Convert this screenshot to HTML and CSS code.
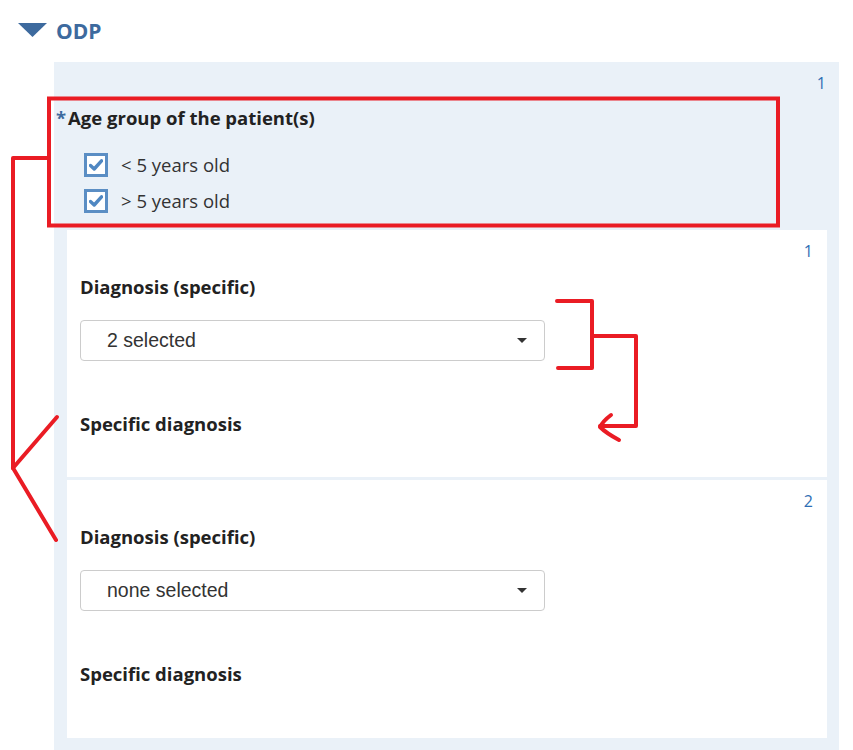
FILE: index.html
```html
<!DOCTYPE html>
<html lang="en">
<head>
<meta charset="utf-8">
<title>ODP</title>
<link rel="stylesheet" href="styles.css">
</head>
<body>
<div class="page">
  <div class="section-header">
    <svg class="toggle" width="29" height="14" viewBox="0 0 29 14"><polygon points="0,0 29,0 14.5,14" fill="#3d6a9e"/></svg>
    <span class="section-title">ODP</span>
  </div>

  <div class="panel">
    <div class="counter">1</div>
    <div class="question">
      <div class="q-title"><span class="req">*</span>Age group of the patient(s)</div>
      <div class="options">
        <label class="option">
          <span class="checkbox"><svg width="14" height="12" viewBox="0 0 14 12"><path d="M1.5 6.5 L5.2 10 L12.5 1.8" fill="none" stroke="#4f87c2" stroke-width="3.4" stroke-linecap="round" stroke-linejoin="round"/></svg></span>
          <span class="opt-label">&lt; 5 years old</span>
        </label>
        <label class="option">
          <span class="checkbox"><svg width="14" height="12" viewBox="0 0 14 12"><path d="M1.5 6.5 L5.2 10 L12.5 1.8" fill="none" stroke="#4f87c2" stroke-width="3.4" stroke-linecap="round" stroke-linejoin="round"/></svg></span>
          <span class="opt-label">&gt; 5 years old</span>
        </label>
      </div>
    </div>

    <div class="cards">
      <div class="card">
        <div class="counter card-counter">1</div>
        <div class="field-label">Diagnosis (specific)</div>
        <div class="select"><span class="select-text">2 selected</span><span class="caret"></span></div>
        <div class="field-label sub-label">Specific diagnosis</div>
      </div>
      <div class="card card-last">
        <div class="counter card-counter">2</div>
        <div class="field-label">Diagnosis (specific)</div>
        <div class="select"><span class="select-text">none selected</span><span class="caret"></span></div>
        <div class="field-label sub-label">Specific diagnosis</div>
      </div>
    </div>
  </div>

  <svg class="annotations" width="853" height="750" viewBox="0 0 853 750">
    <g fill="none" stroke="#ea1c24" stroke-width="4" stroke-linecap="round" stroke-linejoin="round">
      <rect x="49" y="98.5" width="729" height="127" stroke-linecap="butt" stroke-linejoin="miter"/>
      <path d="M47 158 L13 158 L13 468"/>
      <path d="M13 468 L57 417"/>
      <path d="M13 468 L56 540"/>
      <path d="M557 301 L592 301 L592 368 L558 368"/>
      <path d="M592 336 L636 336 L636 426 L600 426"/>
      <path d="M611 415 Q603 421 600 427 Q606 433 619 440"/>
    </g>
  </svg>
</div>
</body>
</html>
```

FILE: styles.css
```css
html, body {
  margin: 0;
  padding: 0;
  background: #ffffff;
}

body {
  font-family: "Open Sans", "Liberation Sans", sans-serif;
  color: #222;
  width: 853px;
  height: 750px;
  overflow: hidden;
}

.page {
  position: relative;
  width: 853px;
  height: 750px;
}

.section-header {
  display: flex;
  align-items: center;
  gap: 9px;
  padding: 19px 0 0 18px;
  height: 25px;
}

.toggle {
  display: block;
  margin-top: -3px;
}

.section-title {
  font-size: 21px;
  font-weight: 700;
  color: #3d6a9e;
  line-height: 25px;
}

.panel {
  margin: 18px 0 0 54px;
  width: 785px;
  box-sizing: border-box;
  background: #eaf1f8;
  padding: 10px 12px 12px 13px;
}

.counter {
  font-size: 16px;
  line-height: 22px;
  height: 22px;
  color: #2f6eb4;
  text-align: right;
  padding-right: 1px;
}

.question {
  padding-left: 1px;
}

.q-title {
  margin-top: 12px;
  font-size: 18.5px;
  font-weight: 700;
  line-height: 24px;
  color: #222;
}

.req {
  color: #3d6a9e;
  margin-left: -12px;
  margin-right: 2px;
  font-weight: 700;
}

.options {
  margin-top: 23px;
  padding-left: 16px;
  display: flex;
  flex-direction: column;
  gap: 12px;
}

.option {
  display: flex;
  align-items: center;
  height: 24px;
}

.checkbox {
  width: 24px;
  height: 24px;
  box-sizing: border-box;
  border: 3px solid #5b8ec4;
  background: #ffffff;
  display: flex;
  align-items: center;
  justify-content: center;
}

.opt-label {
  margin-left: 13px;
  font-size: 18.5px;
  color: #333;
  line-height: 24px;
}

.cards {
  margin-top: 17px;
  display: flex;
  flex-direction: column;
  gap: 3px;
}

.card {
  background: #ffffff;
  padding: 10px 14px 41px 13px;
}

.card-last {
  padding-bottom: 52px;
}

.card-counter {
  padding-right: 0;
}

.field-label {
  margin-top: 13px;
  font-size: 18.5px;
  font-weight: 700;
  line-height: 24px;
  color: #222;
}

.sub-label {
  margin-top: 51px;
}

.select {
  margin-top: 21px;
  width: 465px;
  height: 41px;
  box-sizing: border-box;
  border: 1px solid #cccccc;
  border-radius: 4px;
  display: flex;
  align-items: center;
  justify-content: space-between;
  padding: 0 17px 0 26px;
}

.select-text {
  font-family: "Liberation Sans", Arial, sans-serif;
  font-size: 19.5px;
  color: #333;
}

.caret {
  width: 0;
  height: 0;
  border-left: 5px solid transparent;
  border-right: 5px solid transparent;
  border-top: 5px solid #333;
}

.annotations {
  position: absolute;
  left: 0;
  top: 0;
  pointer-events: none;
}
```
